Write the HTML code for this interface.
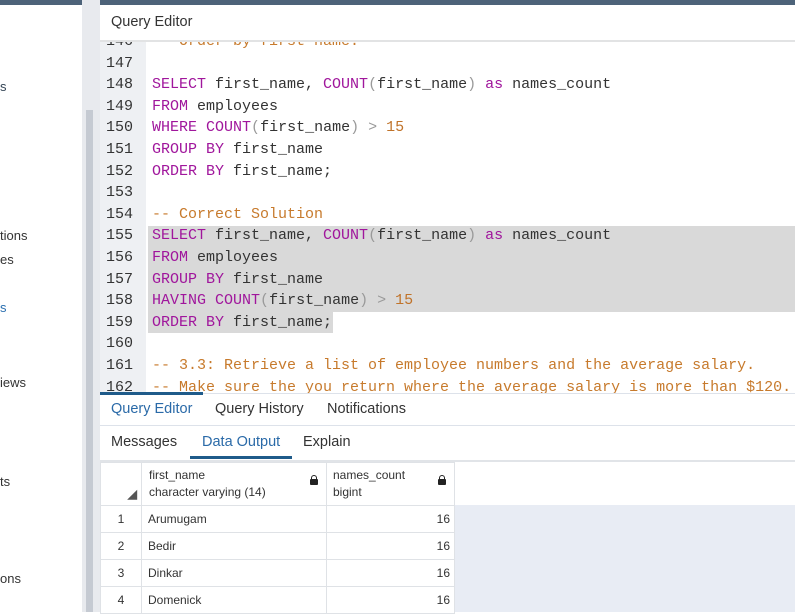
<!DOCTYPE html>
<html><head><style>
*{margin:0;padding:0;box-sizing:border-box}
body{width:795px;height:612px;overflow:hidden;background:#fff;font-family:"Liberation Sans",sans-serif;position:relative;color:#222}
.abs{position:absolute}
.side{font-size:13px;color:#333;left:0}
.code{left:100px;top:42px;width:695px;height:351px;overflow:hidden}
.gut{position:absolute;left:0;top:0;width:46px;height:356px;background:#eef0f3}
.lines{position:absolute;left:0;top:-11px;font-family:"Liberation Mono",monospace;font-size:15px;line-height:21.6px;white-space:pre;color:#333}
.ln{display:inline-block;width:52px;padding-left:6px;color:#333}
.k{color:#a0169c}.c{color:#c77a2c}.n{color:#c0732a}.p{color:#9a9a9a}
.hl{position:absolute;background:#d9d9d9}
.tab{font-size:14.5px;color:#333}
td,th{font-size:12px}
.lock{position:absolute;right:8px;top:16px;width:8px;height:6px;background:#222;border-radius:1px}
.lock:before{content:"";position:absolute;left:1px;top:-4px;width:4px;height:4px;border:1px solid #222;border-bottom:none;border-radius:3px 3px 0 0}
</style></head><body>
<div class="abs" style="left:0;top:0;width:795px;height:5px;background:#4d6379"></div>
<div class="abs" style="left:82px;top:0;width:18px;height:612px;background:#e8eaee"></div>
<div class="abs" style="left:86px;top:110px;width:7px;height:502px;background:#c5cad2"></div>
<div class="abs" style="left:100px;top:5px;width:695px;height:37px;background:#fff;border-bottom:2px solid #e2e3e4"></div>
<div class="abs" style="left:111px;top:14px;font-size:14.5px;color:#333">Query Editor</div>
<div class="abs side" style="top:79px;color:#345">s</div>
<div class="abs side" style="top:228px">tions</div>
<div class="abs side" style="top:252px">es</div>
<div class="abs side" style="top:300px;color:#2a6fb0">s</div>
<div class="abs side" style="top:375px">iews</div>
<div class="abs side" style="top:474px">ts</div>
<div class="abs side" style="top:571px">ons</div>

<div class="abs code">
<div class="gut"></div>
<div class="hl" style="left:48px;top:184px;width:647px;height:86px"></div>
<div class="hl" style="left:48px;top:270px;width:185px;height:21px"></div>
<div class="lines"><span class="ln">146</span><span class="c">-- Order by first name.</span>
<span class="ln">147</span>
<span class="ln">148</span><span class="k">SELECT</span> first_name, <span class="k">COUNT</span><span class="p">(</span>first_name<span class="p">)</span> <span class="k">as</span> names_count
<span class="ln">149</span><span class="k">FROM</span> employees
<span class="ln">150</span><span class="k">WHERE</span> <span class="k">COUNT</span><span class="p">(</span>first_name<span class="p">)</span> <span class="p">&gt;</span> <span class="n">15</span>
<span class="ln">151</span><span class="k">GROUP BY</span> first_name
<span class="ln">152</span><span class="k">ORDER BY</span> first_name;
<span class="ln">153</span>
<span class="ln">154</span><span class="c">-- Correct Solution</span>
<span class="ln">155</span><span class="k">SELECT</span> first_name, <span class="k">COUNT</span><span class="p">(</span>first_name<span class="p">)</span> <span class="k">as</span> names_count
<span class="ln">156</span><span class="k">FROM</span> employees
<span class="ln">157</span><span class="k">GROUP BY</span> first_name
<span class="ln">158</span><span class="k">HAVING</span> <span class="k">COUNT</span><span class="p">(</span>first_name<span class="p">)</span> <span class="p">&gt;</span> <span class="n">15</span>
<span class="ln">159</span><span class="k">ORDER BY</span> first_name;
<span class="ln">160</span>
<span class="ln">161</span><span class="c">-- 3.3: Retrieve a list of employee numbers and the average salary.</span>
<span class="ln">162</span><span class="c">-- Make sure the you return where the average salary is more than $120.</span></div>
</div>

<div class="abs" style="left:100px;top:393px;width:695px;height:219px;background:#fff;border-top:1px solid #dde2ea"></div>
<div class="abs" style="left:100px;top:392px;width:103px;height:3px;background:#1f5b8a"></div>
<div class="abs tab" style="left:111px;top:401px;color:#2a6aa8">Query Editor</div>
<div class="abs tab" style="left:215px;top:401px">Query History</div>
<div class="abs tab" style="left:327px;top:401px">Notifications</div>
<div class="abs" style="left:100px;top:425px;width:695px;height:1px;background:#dde2ea"></div>
<div class="abs tab" style="left:111px;top:434px">Messages</div>
<div class="abs tab" style="left:202px;top:434px;color:#2a6aa8">Data Output</div>
<div class="abs tab" style="left:303px;top:434px">Explain</div>
<div class="abs" style="left:190px;top:456px;width:102px;height:3px;background:#1f5b8a"></div>
<div class="abs" style="left:100px;top:460px;width:695px;height:2px;background:#e1e4e8"></div>
<div class="abs" style="left:455px;top:505px;width:340px;height:107px;background:#e8ecf4"></div>
<div class="abs" style="left:100px;top:462px;width:355px;height:150px">
<table style="border-collapse:collapse;width:355px;color:#333">
<tr style="height:43px"><th style="width:41px;border:1px solid #dfe2e6;text-align:right;vertical-align:bottom;padding:0 4px 4px 0;color:#555">◢</th>
<th style="width:185px;border:1px solid #dfe2e6;text-align:left;font-weight:normal;padding-left:7px;line-height:17px;position:relative">first_name<br>character varying (14)<span class="lock"></span></th>
<th style="border:1px solid #dfe2e6;text-align:left;font-weight:normal;padding-left:6px;line-height:17px;position:relative">names_count<br>bigint<span class="lock"></span></th></tr>
<tr style="height:27px"><td style="text-align:center;border:1px solid #dfe2e6">1</td><td style="border:1px solid #dfe2e6;padding-left:6px">Arumugam</td><td style="border:1px solid #dfe2e6;text-align:right;padding-right:4px">16</td></tr>
<tr style="height:27px"><td style="text-align:center;border:1px solid #dfe2e6">2</td><td style="border:1px solid #dfe2e6;padding-left:6px">Bedir</td><td style="border:1px solid #dfe2e6;text-align:right;padding-right:4px">16</td></tr>
<tr style="height:27px"><td style="text-align:center;border:1px solid #dfe2e6">3</td><td style="border:1px solid #dfe2e6;padding-left:6px">Dinkar</td><td style="border:1px solid #dfe2e6;text-align:right;padding-right:4px">16</td></tr>
<tr style="height:27px"><td style="text-align:center;border:1px solid #dfe2e6">4</td><td style="border:1px solid #dfe2e6;padding-left:6px">Domenick</td><td style="border:1px solid #dfe2e6;text-align:right;padding-right:4px">16</td></tr>
</table></div>
</body></html>
